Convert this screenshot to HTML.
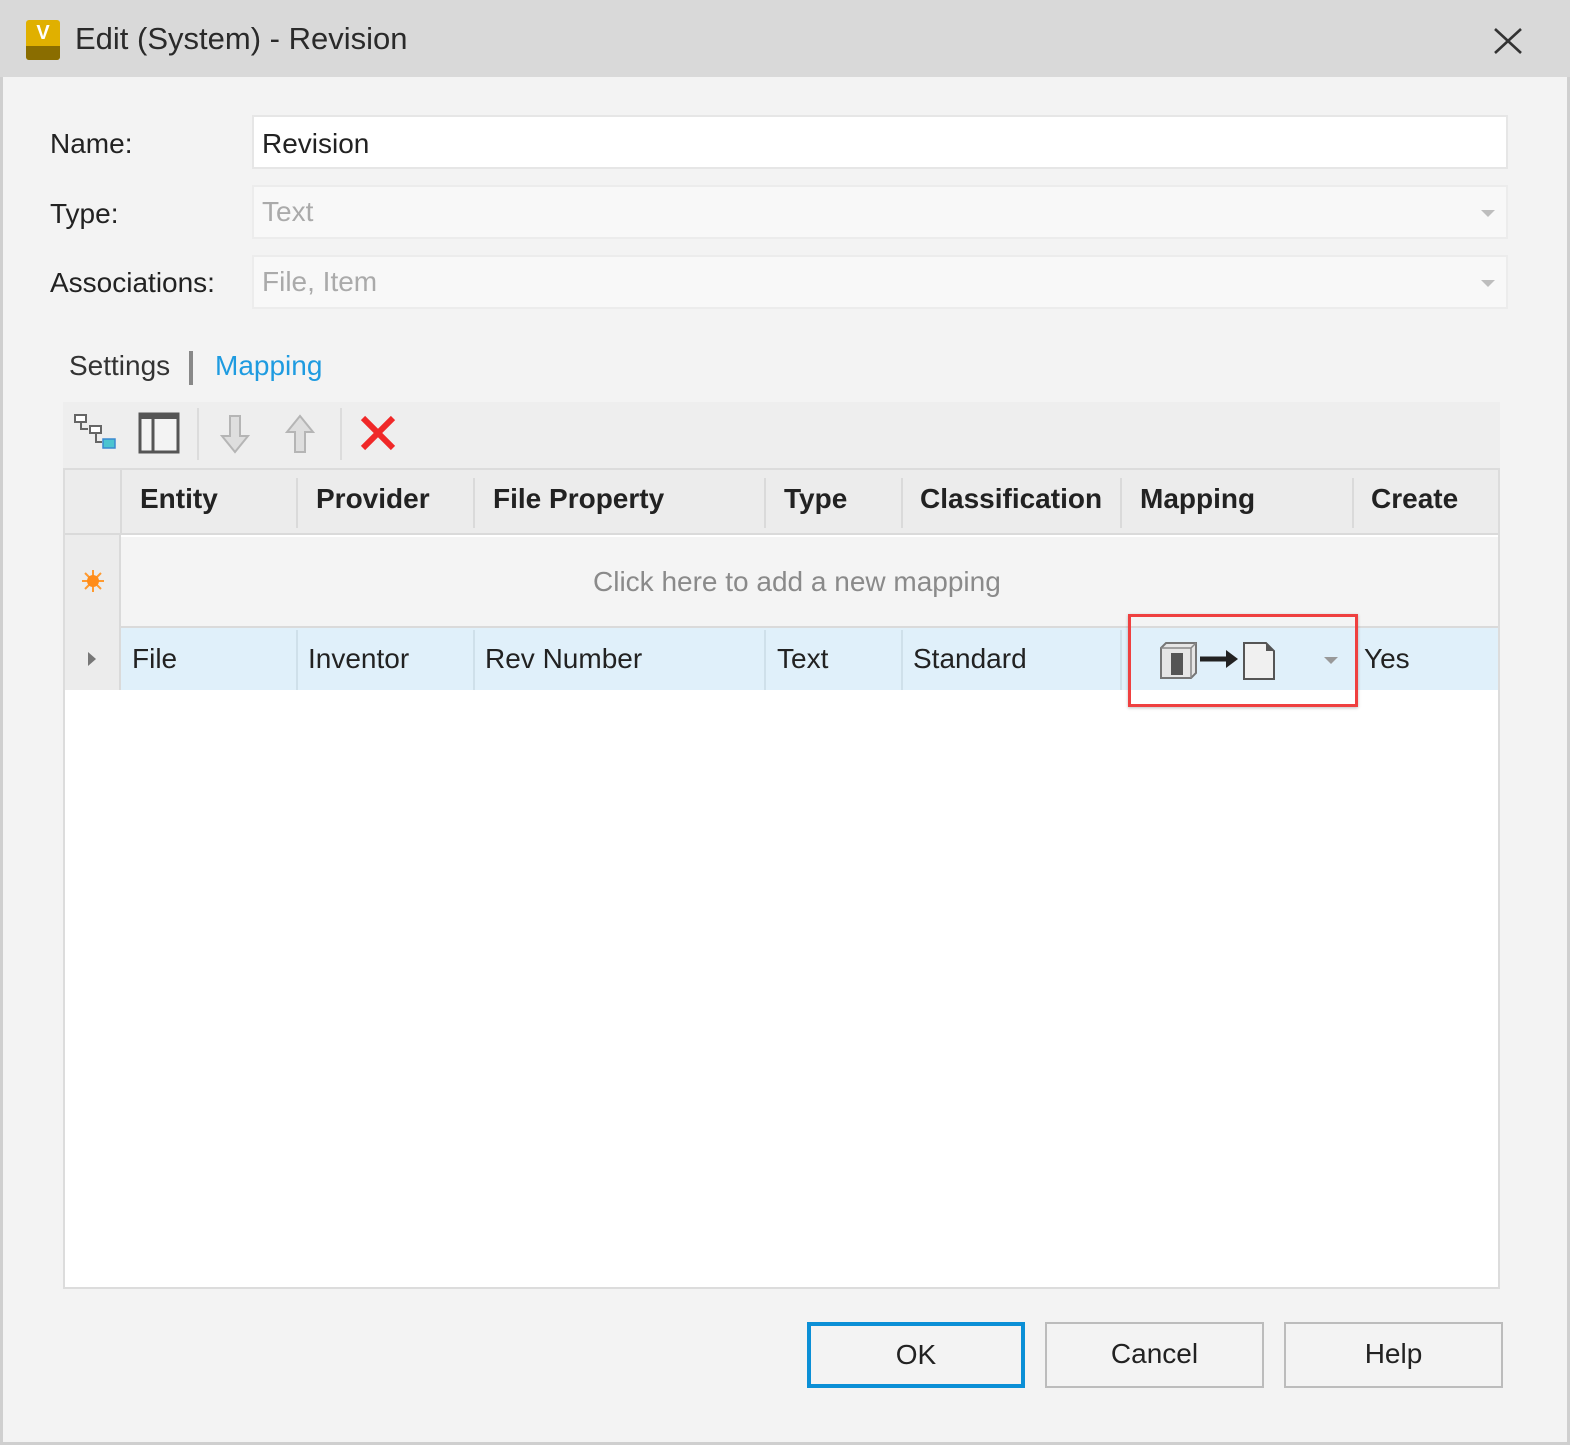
<!DOCTYPE html>
<html><head><meta charset="utf-8"><style>
*{margin:0;padding:0;box-sizing:border-box}
body{width:1575px;height:1450px;background:#fff;font-family:"Liberation Sans",sans-serif;position:relative;overflow:hidden;color:#222}
.a{position:absolute}
#dlg{left:0;top:0;width:1570px;height:1445px;background:#f3f3f3;border:3px solid #cfcfcf;border-top:2px solid #cfcfcf}
#title{left:0;top:0;width:1570px;height:77px;background:#d9d9d9}
.t{font-size:28px;line-height:34px;white-space:nowrap}
.in{background:#fff;border:2px solid #e6e6e6}
.dis{background:#f8f8f8;border:2px solid #ececec}
.caret{width:0;height:0;border-left:7px solid transparent;border-right:7px solid transparent;border-top:7px solid #bdbdbd}
.hd{font-weight:bold;font-size:28px;color:#222;top:482px}
.vl{width:2px;background:#dadada}
.btn{border:2px solid #bcbcbc;background:#f3f3f3;font-size:28px;text-align:center;line-height:60px;color:#222}
</style></head><body>
<div id="dlg" class="a"></div>
<div id="title" class="a"></div>
<div class="a" style="left:26px;top:20px;width:34px;height:40px;background:#e0b000;border-radius:3px"></div>
<div class="a" style="left:26px;top:46px;width:34px;height:14px;background:#8a6d00;border-radius:0 0 3px 3px"></div>
<div class="a" style="left:26px;top:20px;width:34px;font-size:20px;color:#fff;font-weight:bold;text-align:center;line-height:26px">V</div>
<div class="a t" style="left:75px;top:22px;font-size:31px;color:#2a2a2a">Edit (System) - Revision</div>
<svg class="a" style="left:1492px;top:26px" width="32" height="30"><path d="M3 3L29 27M29 3L3 27" stroke="#333" stroke-width="2.6"/></svg>

<div class="a t" style="left:50px;top:127px">Name:</div>
<div class="a t" style="left:50px;top:197px">Type:</div>
<div class="a t" style="left:50px;top:266px">Associations:</div>
<div class="a in" style="left:252px;top:115px;width:1256px;height:54px"></div>
<div class="a t" style="left:262px;top:127px">Revision</div>
<div class="a dis" style="left:252px;top:185px;width:1256px;height:54px"></div>
<div class="a t" style="left:262px;top:195px;color:#aaa">Text</div>
<div class="a caret" style="left:1481px;top:210px"></div>
<div class="a dis" style="left:252px;top:255px;width:1256px;height:54px"></div>
<div class="a t" style="left:262px;top:265px;color:#aaa">File, Item</div>
<div class="a caret" style="left:1481px;top:280px"></div>

<div class="a t" style="left:69px;top:349px;color:#333">Settings</div>
<div class="a" style="left:189px;top:351px;width:4px;height:34px;background:#888"></div>
<div class="a t" style="left:215px;top:349px;color:#1e9be0">Mapping</div>

<div class="a" style="left:63px;top:402px;width:1437px;height:66px;background:#eeeeee"></div>
<svg class="a" style="left:72px;top:412px" width="46" height="42"><rect x="3" y="3" width="11" height="7" fill="#fff" stroke="#666" stroke-width="2"/><path d="M9 11V17H16" stroke="#666" stroke-width="2" fill="none"/><rect x="18" y="14" width="11" height="7" fill="#fff" stroke="#666" stroke-width="2"/><path d="M24 22V30H30" stroke="#666" stroke-width="2" fill="none"/><rect x="31" y="27" width="12" height="9" fill="#4cc4d0" stroke="#3a8ad0" stroke-width="1.5"/></svg>
<svg class="a" style="left:138px;top:412px" width="44" height="44"><rect x="2" y="2" width="38" height="38" fill="#f3f3f3" stroke="#555" stroke-width="3"/><rect x="2" y="2" width="38" height="5" fill="#555"/><path d="M15 5V40" stroke="#555" stroke-width="3"/></svg>
<div class="a vl" style="left:197px;top:408px;height:52px;background:#dcdcdc"></div>
<svg class="a" style="left:220px;top:414px" width="30" height="40"><path d="M10 2H20V22H28L15 38L2 22H10Z" fill="#dedede" stroke="#b5b5b5" stroke-width="2"/></svg>
<svg class="a" style="left:285px;top:414px" width="30" height="40"><path d="M10 38H20V18H28L15 2L2 18H10Z" fill="#dedede" stroke="#b5b5b5" stroke-width="2"/></svg>
<div class="a vl" style="left:340px;top:408px;height:52px;background:#dcdcdc"></div>
<svg class="a" style="left:359px;top:414px" width="38" height="38"><path d="M4 4L34 34M34 4L4 34" stroke="#f02828" stroke-width="6"/></svg>

<div class="a" style="left:63px;top:468px;width:1437px;height:821px;background:#fff;border:2px solid #dcdcdc"></div>
<div class="a" style="left:65px;top:470px;width:1433px;height:65px;background:#ececec;border-bottom:2px solid #dadada"></div>
<div class="a" style="left:65px;top:535px;width:56px;height:155px;background:#ececec;border-right:2px solid #dadada"></div>
<div class="a" style="left:121px;top:537px;width:1377px;height:91px;background:#f4f4f4;border-bottom:2px solid #dadada"></div>
<div class="a" style="left:121px;top:628px;width:1377px;height:62px;background:#e0f0fa"></div>
<div class="a vl" style="left:120px;top:470px;height:65px"></div>
<div class="a vl" style="left:296px;top:478px;height:50px"></div>
<div class="a vl" style="left:473px;top:478px;height:50px"></div>
<div class="a vl" style="left:764px;top:478px;height:50px"></div>
<div class="a vl" style="left:901px;top:478px;height:50px"></div>
<div class="a vl" style="left:1120px;top:478px;height:50px"></div>
<div class="a vl" style="left:1352px;top:478px;height:50px"></div>
<div class="a vl" style="left:296px;top:630px;height:60px;background:#cfe0ea"></div>
<div class="a vl" style="left:473px;top:630px;height:60px;background:#cfe0ea"></div>
<div class="a vl" style="left:764px;top:630px;height:60px;background:#cfe0ea"></div>
<div class="a vl" style="left:901px;top:630px;height:60px;background:#cfe0ea"></div>
<div class="a vl" style="left:1120px;top:630px;height:60px;background:#cfe0ea"></div>

<div class="a t hd" style="left:140px">Entity</div>
<div class="a t hd" style="left:316px">Provider</div>
<div class="a t hd" style="left:493px">File Property</div>
<div class="a t hd" style="left:784px">Type</div>
<div class="a t hd" style="left:920px">Classification</div>
<div class="a t hd" style="left:1140px">Mapping</div>
<div class="a t hd" style="left:1371px">Create</div>

<svg class="a" style="left:80px;top:568px" width="26" height="26"><g stroke="#ff9a30" stroke-width="2"><path d="M13 2V24M2 13H24M5 5L21 21M21 5L5 21"/></g><circle cx="13" cy="13" r="6" fill="#ff8c1a"/></svg>
<div class="a t" style="left:593px;top:565px;color:#8a8a8a">Click here to add a new mapping</div>

<svg class="a" style="left:86px;top:650px" width="12" height="18"><path d="M2 2L10 9L2 16Z" fill="#777"/></svg>
<div class="a t" style="left:132px;top:642px">File</div>
<div class="a t" style="left:308px;top:642px">Inventor</div>
<div class="a t" style="left:485px;top:642px">Rev Number</div>
<div class="a t" style="left:777px;top:642px">Text</div>
<div class="a t" style="left:913px;top:642px">Standard</div>
<div class="a t" style="left:1364px;top:642px">Yes</div>
<svg class="a" style="left:1158px;top:640px" width="122" height="42"><path d="M3 8L8 3H38V33L33 38H3Z" fill="#e6e6e6" stroke="#777" stroke-width="2"/><path d="M3 8H33V38M33 8L38 3" stroke="#888" stroke-width="1.5" fill="none"/><rect x="13" y="13" width="12" height="22" fill="#555"/><path d="M42 19H70" stroke="#222" stroke-width="5"/><path d="M68 10L80 19L68 28Z" fill="#222"/><path d="M86 3H108L116 11V39H86Z" fill="#f0f0f0" stroke="#555" stroke-width="2"/><path d="M108 3V11H116Z" fill="#555"/></svg>
<div class="a caret" style="left:1324px;top:657px;border-top-color:#999"></div>
<div class="a" style="left:1128px;top:614px;width:230px;height:93px;border:3px solid #ef4040;box-shadow:0 1px 3px rgba(0,0,0,.25)"></div>

<div class="a btn" style="left:807px;top:1322px;width:218px;height:66px;border:4px solid #0b8fd6;line-height:58px">OK</div>
<div class="a btn" style="left:1045px;top:1322px;width:219px;height:66px">Cancel</div>
<div class="a btn" style="left:1284px;top:1322px;width:219px;height:66px">Help</div>
</body></html>
